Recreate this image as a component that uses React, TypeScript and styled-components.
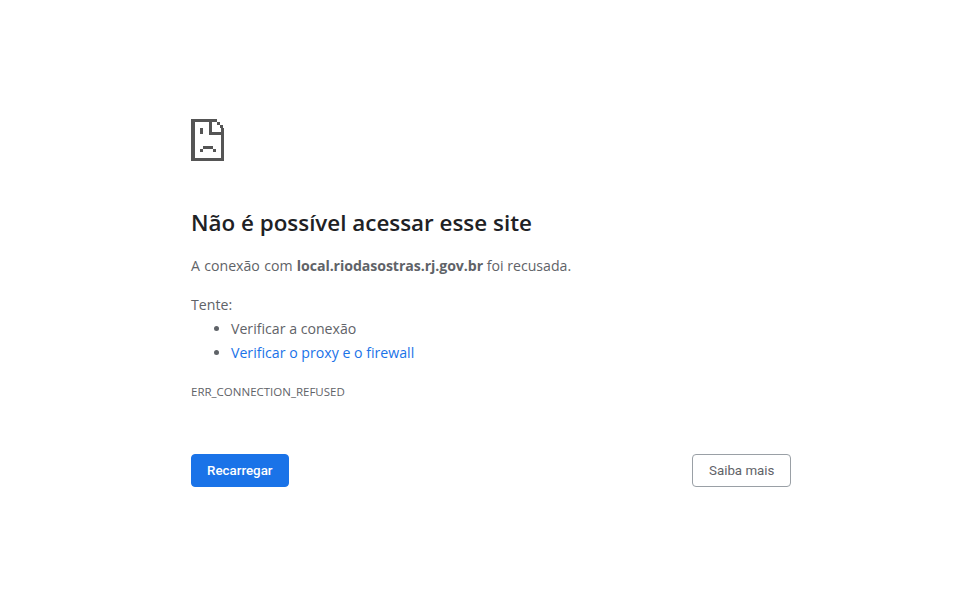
import React from 'react';
import styled, { createGlobalStyle } from 'styled-components';

const GlobalStyle = createGlobalStyle`
  html, body {
    margin: 0;
    background: #fff;
  }
  body {
    font-family: 'Open Sans', 'Noto Sans', sans-serif;
    font-size: 14.15px;
    color: #5f6368;
  }
`;

const Page = styled.div`
  min-height: 605px;
  box-sizing: border-box;
  padding: 119px 0 0 191px;
`;

const Wrapper = styled.div`
  width: 600px;
`;

const IconBox = styled.div`
  height: 42px;
  margin-bottom: 46px;
  svg {
    display: block;
  }
`;

const Title = styled.h1`
  margin: 0 0 15px;
  font-size: 22.4px;
  line-height: 32px;
  font-weight: 600;
  color: #202124;
`;

const Paragraph = styled.p`
  margin: 0 0 15px;
  line-height: 24px;
`;

const Intro = styled.span`
  word-spacing: 0.6px;
`;

const Host = styled.strong`
  font-weight: 700;
  letter-spacing: -0.07px;
`;

const Prompt = styled.div`
  line-height: 24px;
`;

const SuggestionList = styled.ul`
  margin: 0 0 19px;
  padding-left: 40px;
`;

const Suggestion = styled.li`
  line-height: 24px;
`;

const SuggestionLink = styled.a`
  color: #1a73e8;
  text-decoration: none;
`;

const ErrorCode = styled.div`
  font-size: 11.5px;
  line-height: 16px;
  color: #5f6368;
  margin-bottom: 54px;
`;

const Buttons = styled.div`
  display: flex;
  justify-content: space-between;
`;

const Button = styled.button<{ $primary?: boolean }>`
  height: 33px;
  box-sizing: border-box;
  padding: 0 ${(p) => (p.$primary ? '15px' : '15.5px')};
  border-radius: 4px;
  font-family: Roboto, 'Liberation Sans', sans-serif;
  font-size: 13.33px;
  font-weight: ${(p) => (p.$primary ? 500 : 400)};
  background: ${(p) => (p.$primary ? '#1a73e8' : '#fff')};
  color: ${(p) => (p.$primary ? '#fff' : '#5f6368')};
  border: 1px solid ${(p) => (p.$primary ? '#1a73e8' : '#9aa0a6')};
`;

const SadPageIcon = () => (
  <svg width="33" height="42" viewBox="0 0 33 42" shapeRendering="crispEdges" fill="#555">
    <path d="M0 0h26v3H4v36h26V9h3v33H0z" />
    <path d="M26 3h3v3h-3zM29 6h3v3h-3z" />
    <path d="M18 3h3v10h12v3H18z" />
    <path d="M9 9h3v6H9zM12 27h10v3H12zM9 30h3v3H9zM22 30h3v3h-3z" />
  </svg>
);

export default function App() {
  return (
    <Page>
      <GlobalStyle />
      <Wrapper>
        <IconBox>
          <SadPageIcon />
        </IconBox>
        <Title>Não é possível acessar esse site</Title>
        <Paragraph>
          <Intro>A conexão com </Intro>
          <Host>local.riodasostras.rj.gov.br</Host> foi recusada.
        </Paragraph>
        <Prompt>Tente:</Prompt>
        <SuggestionList>
          <Suggestion>Verificar a conexão</Suggestion>
          <Suggestion>
            <SuggestionLink href="#">Verificar o proxy e o firewall</SuggestionLink>
          </Suggestion>
        </SuggestionList>
        <ErrorCode>ERR_CONNECTION_REFUSED</ErrorCode>
        <Buttons>
          <Button $primary>Recarregar</Button>
          <Button>Saiba mais</Button>
        </Buttons>
      </Wrapper>
    </Page>
  );
}
